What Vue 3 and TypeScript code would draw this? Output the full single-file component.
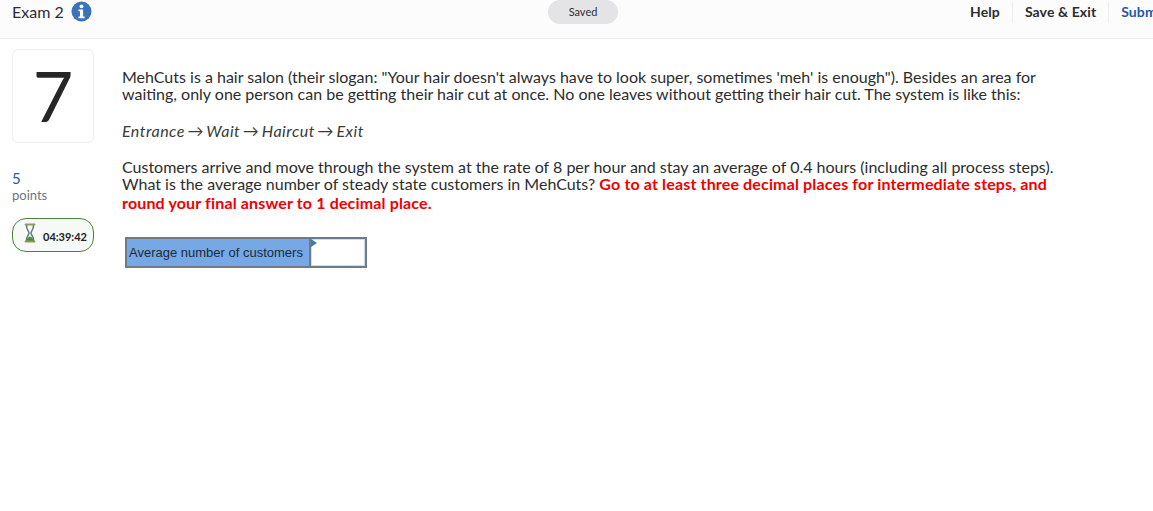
<template>
  <div class="page">
    <header class="topbar">
      <div class="title">
        <span class="exam">Exam 2</span>
        <svg class="info" viewBox="0 0 22 22" width="21" height="21">
          <circle cx="11" cy="11" r="10.500" fill="#3b73b9" />
          <circle cx="11" cy="5.600" r="2" fill="#fff" />
          <path d="M7.800 9h4.900v7.200h1.600V18H7.800v-1.800h1.600v-5.400H7.800z" fill="#fff" />
        </svg>
      </div>
      <div class="saved">Saved</div>
      <nav class="actions">
        <span class="action">Help</span>
        <span class="action">Save &amp; Exit</span>
        <span class="action submit">Submit</span>
      </nav>
    </header>

    <main class="content">
      <aside class="side">
        <div class="number">7</div>
        <div class="points">
          <div class="points-value">5</div>
          <div class="points-label">points</div>
        </div>
        <div class="timer">
          <svg class="glass" viewBox="0 0 12 20" width="12" height="20">
            <path d="M2.400 2c0 5 2.600 6 2.600 8s-2.600 3-2.600 8M9.600 2c0 5-2.600 6-2.600 8s2.600 3 2.600 8" fill="none" stroke="#5d7a80" stroke-width="1.500" />
            <path d="M2.600 18c.3-2.400 1.800-3.800 3.400-4.400 1.600.6 3.100 2 3.400 4.400z" fill="#4f8a35" />
            <path d="M1.500 1.500h9M1.500 18.500h9" stroke="#8c9a5a" stroke-width="1.800" stroke-linecap="round" />
          </svg>
          <span>{{ timeLeft }}</span>
        </div>
      </aside>

      <section class="question">
        <p class="para">
          MehCuts is a hair salon (their slogan: "Your hair doesn't always have to look super, sometimes 'meh' is enough"). Besides an area for waiting, only one person can be getting their hair cut at once. No one leaves without getting their hair cut. The system is like this:
        </p>
        <p class="flow"><em>Entrance → Wait → Haircut → Exit</em></p>
        <p class="para">
          Customers arrive and move through the system at the rate of 8 per hour and stay an average of 0.4 hours (including all process steps). What is the average number of steady state customers in MehCuts?
          <strong class="red">Go to at least three decimal places for intermediate steps, and round your final answer to 1 decimal place.</strong>
        </p>
        <div class="answer">
          <div class="answer-label">Average number of customers</div>
          <div class="answer-input"></div>
        </div>
      </section>
    </main>
  </div>
</template>

<script setup lang="ts">
const timeLeft = "04:39:42";
</script>

<style>
html,
body {
  background: #fff;
  overflow: hidden;
}
</style>

<style scoped>
.page {
  width: 1153px;
  height: 511px;
  overflow: hidden;
  font-family: Lato, "Liberation Sans", sans-serif;
  color: #2d2d2d;
}

.topbar {
  height: 39px;
  box-sizing: border-box;
  background: #fcfcfc;
  border-bottom: 1px solid #eeeeee;
  display: grid;
  grid-template-columns: 536px 70px 1fr;
  align-items: start;
  padding-left: 12px;
}

.title {
  display: flex;
  align-items: center;
  gap: 7px;
  height: 23px;
}

.exam {
  font-size: 16px;
}

.saved {
  height: 24px;
  background: #e4e4e6;
  border-radius: 12px;
  font-size: 11px;
  line-height: 23px;
  text-align: center;
}

.actions {
  display: flex;
  padding-left: 340px;
  padding-top: 2px;
  white-space: nowrap;
}

.action {
  height: 21px;
  line-height: 20px;
  font-size: 14px;
  font-weight: 700;
  letter-spacing: 0.1px;
  padding: 0 12px;
  border-left: 1px solid #eeeeee;
}

.action:first-child {
  border-left: none;
}

.submit {
  color: #1f5aa6;
}

.content {
  display: flex;
  padding: 10px 0 0 12px;
}

.side {
  width: 82px;
  flex: none;
}

.number {
  width: 82px;
  height: 94px;
  box-sizing: border-box;
  border: 1px solid #eeeeee;
  border-radius: 6px;
  font-size: 70px;
  line-height: 90px;
  text-align: center;
  color: #262626;
}

.points {
  margin-top: 26px;
}

.points-value {
  font-size: 15px;
  line-height: 18px;
  color: #2d5a94;
}

.points-label {
  font-size: 13px;
  line-height: 16px;
  color: #6d7480;
}

.timer {
  margin-top: 15px;
  height: 34px;
  box-sizing: border-box;
  border: 1px solid #4c8235;
  border-radius: 14px;
  background: #f7f9f7;
  display: flex;
  align-items: center;
  gap: 7px;
  padding-left: 11px;
  padding-top: 2px;
  font-size: 11px;
  font-weight: 700;
  color: #222;
}

.glass {
  margin-top: -7px;
}

.question {
  margin-left: 28px;
  width: 945px;
  padding-top: 19px;
  font-size: 16px;
  line-height: 17px;
}

.para {
  margin: 0;
}

.flow {
  margin: 20px 0 19px;
  letter-spacing: 0.5px;
  word-spacing: -1.7px;
  color: #3a3a3a;
}

.red {
  color: #f00000;
  font-weight: 700;
  line-height: 18.5px;
  letter-spacing: 0.15px;
}

.answer {
  display: flex;
  width: 242px;
  height: 31px;
  margin: 25px 0 0 3px;
  box-sizing: border-box;
  border: 2px solid #6f7b88;
}

.answer-label {
  flex: none;
  width: 184px;
  box-sizing: border-box;
  background: #75a8e4;
  border-right: 2px solid #6f7b88;
  font-family: "Liberation Sans", sans-serif;
  font-size: 13px;
  letter-spacing: 0;
  line-height: 27px;
  padding-left: 2px;
  white-space: nowrap;
  color: #1f2a38;
}

.answer-input {
  flex: 1;
  background: #fff;
  position: relative;
  border: 1px solid #c9dcf2;
}

.answer-input::before {
  content: "";
  position: absolute;
  top: -1px;
  left: -1px;
  border-top: 4px solid transparent;
  border-bottom: 4px solid transparent;
  border-left: 6px solid #3f78c0;
}
</style>
